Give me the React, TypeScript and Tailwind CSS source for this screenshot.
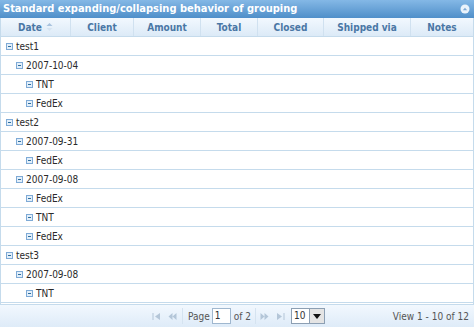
import React from "react";

const rows: { level: number; text: string }[] = [
  { level: 0, text: "test1" },
  { level: 1, text: "2007-10-04" },
  { level: 2, text: "TNT" },
  { level: 2, text: "FedEx" },
  { level: 0, text: "test2" },
  { level: 1, text: "2007-09-31" },
  { level: 2, text: "FedEx" },
  { level: 1, text: "2007-09-08" },
  { level: 2, text: "FedEx" },
  { level: 2, text: "TNT" },
  { level: 2, text: "FedEx" },
  { level: 0, text: "test3" },
  { level: 1, text: "2007-09-08" },
  { level: 2, text: "TNT" },
];

const cols = [
  { label: "Date", w: "w-[70px]" },
  { label: "Client", w: "w-[63px]" },
  { label: "Amount", w: "w-[67px]" },
  { label: "Total", w: "w-[57px]" },
  { label: "Closed", w: "w-[66px]" },
  { label: "Shipped via", w: "w-[87px]" },
  { label: "Notes", w: "flex-1" },
];

function GroupIcon() {
  return (
    <svg width="7" height="7" viewBox="0 0 7 7" className="shrink-0">
      <rect x="0.5" y="0.5" width="6" height="6" fill="#e3effa" stroke="#7eaad6" />
      <rect x="2" y="3" width="3" height="1" fill="#2e6e9e" />
    </svg>
  );
}

function PagerIcon({ d }: { d: string }) {
  return (
    <svg width="9" height="7" viewBox="0 0 9 7" className="shrink-0">
      <path d={d} fill="#b4c6d8" />
    </svg>
  );
}

export default function App() {
  const indent = ["pl-[5px]", "pl-[15px]", "pl-[25px]"];
  return (
    <div
      className="w-[474px] h-[327px] overflow-hidden bg-white flex flex-col text-[10px] text-[#2a2a2a]"
      style={{ fontFamily: '"DejaVu Sans Condensed", "DejaVu Sans", Verdana, sans-serif' }}
    >
      <div className="h-[18px] shrink-0 flex items-center justify-between pl-[3px] pr-[4px] bg-gradient-to-b from-[#84b8e6] to-[#4f8fc9] text-white font-bold text-[11px]">
        <span>Standard expanding/collapsing behavior of grouping</span>
        <svg width="10" height="10" viewBox="0 0 10 10">
          <circle cx="5" cy="5" r="4.5" fill="#eaf3fb" />
          <path d="M2.8 6.2 L5 3.8 L7.2 6.2 Z" fill="#7ea9d4" />
        </svg>
      </div>
      <div className="h-[19px] shrink-0 flex border-l border-r border-b border-[#c5dbec] bg-gradient-to-b from-[#f2f8fe] to-[#dceaf7] text-[#4a77a5] font-bold">
        {cols.map((c, i) => (
          <div
            key={c.label}
            className={`${c.w} flex items-center justify-center ${i < cols.length - 1 ? "border-r border-[#d0e1f0]" : ""}`}
          >
            {c.label}
            {i === 0 && (
              <svg width="7" height="8" viewBox="0 0 7 8" className="ml-[4px]">
                <path d="M0.5 3 L3.5 0 L6.5 3 Z" fill="#a9c3de" />
                <path d="M0.5 5 L3.5 8 L6.5 5 Z" fill="#d6e4f2" />
              </svg>
            )}
          </div>
        ))}
      </div>
      <div className="flex-1 flex flex-col border-l border-r border-[#c5dbec]">
        {rows.map((r, i) => (
          <div
            key={i}
            className={`h-[19px] shrink-0 flex items-center gap-[3px] border-b border-[#c5dbec] ${indent[r.level]}`}
          >
            <GroupIcon />
            <span>{r.text}</span>
          </div>
        ))}
      </div>
      <div className="h-[23px] shrink-0 relative flex items-center border-t border-[#c5dbec] bg-gradient-to-b from-[#f2f8fe] to-[#deebf8] text-[#555]">
        <div className="absolute left-[152px] top-0 h-full flex items-center">
          <PagerIcon d="M0.5 0 H1.5 V7 H0.5 Z M8 0 L3 3.5 L8 7 Z" />
          <span className="w-[7px]" />
          <PagerIcon d="M4.5 0 L0.5 3.5 L4.5 7 Z M8.5 0 L4.5 3.5 L8.5 7 Z" />
          <span className="mx-[5px] w-px h-[16px] bg-[#d5e3f0]" />
          <span>Page</span>
          <span className="ml-[2px] w-[19px] h-[16px] border border-[#9fb7cf] bg-white text-[#333] pl-[2px] leading-[14px]">1</span>
          <span className="ml-[3px]">of 2</span>
          <span className="mx-[4px] w-px h-[16px] bg-[#d5e3f0]" />
          <PagerIcon d="M0.5 0 L4.5 3.5 L0.5 7 Z M4.5 0 L8.5 3.5 L4.5 7 Z" />
          <span className="w-[7px]" />
          <PagerIcon d="M1 0 L6 3.5 L1 7 Z M7.5 0 H8.5 V7 H7.5 Z" />
          <span className="ml-[6px] flex items-center h-[16px] border border-[#8c9fb3] bg-white">
            <span className="w-[17px] pl-[2px] text-[#333] leading-[14px]">10</span>
            <span className="w-[15px] h-full bg-[#e4e4e4] border-l border-[#8c9fb3] flex items-center justify-center">
              <svg width="8" height="5" viewBox="0 0 8 5">
                <path d="M0 0 H8 L4 5 Z" fill="#111" />
              </svg>
            </span>
          </span>
        </div>
        <span className="ml-auto pr-[5px]">View 1 - 10 of 12</span>
      </div>
    </div>
  );
}
